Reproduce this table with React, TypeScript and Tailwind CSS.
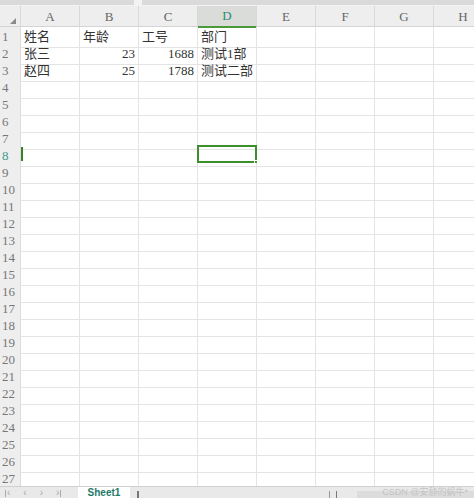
const COLS = ['A', 'B', 'C', 'D', 'E', 'F', 'G', 'H']
const ROWS = Array.from({ length: 27 }, (_, i) => i + 1)

const DATA: Record<number, { v: string; right?: boolean }[]> = {
  1: [{ v: '姓名' }, { v: '年龄' }, { v: '工号' }, { v: '部门' }],
  2: [{ v: '张三' }, { v: '23', right: true }, { v: '1688', right: true }, { v: '测试1部' }],
  3: [{ v: '赵四' }, { v: '25', right: true }, { v: '1788', right: true }, { v: '测试二部' }],
}

const FONT = "font-['Liberation_Serif','Noto_Sans_CJK_SC',serif]"

export default function App() {
  return (
    <div className={`w-[474px] h-[498px] overflow-hidden bg-white relative ${FONT}`}>
      {/* top strip */}
      <div className="flex h-[6px] bg-[#f3f3f3]">
        <div className="w-[134px] h-[5px] bg-[#dadada]" />
        <div className="w-[8px]" />
        <div className="flex-1 h-[5px] bg-[#dadada]" />
      </div>

      {/* column header */}
      <div className="grid grid-cols-[21px_repeat(8,59px)] h-[21px] bg-[#eeeeee] border-b border-[#d4d4d4]">
        <div className="relative border-r border-[#d8d8d8]">
          <div className="absolute right-[4px] bottom-[4px] w-0 h-0 border-l-[6px] border-l-transparent border-b-[6px] border-b-[#8a8a8a]" />
        </div>
        {COLS.map(c => (
          <div
            key={c}
            className={`flex items-center justify-center text-[13px] border-r border-[#d8d8d8] ${
              c === 'D'
                ? 'bg-[#d9dcd9] text-[#2e8b6e] border-b-2 border-b-[#4a9a3a]'
                : 'text-[#666]'
            }`}
          >
            {c}
          </div>
        ))}
      </div>

      {/* grid body */}
      <div className="flex flex-col">
        {ROWS.map(r => (
          <div key={r} className="grid grid-cols-[21px_repeat(8,59px)] h-[17px]">
            <div
              className={`flex items-center pl-[2px] text-[13px] bg-[#eeeeee] border-r border-b border-[#dcdcdc] ${
                r === 8 ? 'text-[#3e9a8a]' : 'text-[#777]'
              }`}
            >
              {r}
            </div>
            {COLS.map((c, ci) => {
              const cell = DATA[r]?.[ci]
              const sel = r === 8 && c === 'D'
              return (
                <div
                  key={c}
                  className={`relative flex items-center text-[13px] text-[#333] border-r border-b border-[#e4e4e4] px-[3px] whitespace-nowrap ${
                    cell?.right ? 'justify-end' : ''
                  }`}
                >
                  {cell?.v}
                  {r === 8 && c === 'A' && (
                    <div className="absolute left-0 top-[1px] w-[2px] h-[14px] bg-[#3a7f2a]" />
                  )}
                  {sel && (
                    <div className="absolute -left-[1px] -top-[1px] w-[60px] h-[18px] border-2 border-[#3c8f2c]">
                      <div className="absolute -right-[3px] -bottom-[3px] w-[4px] h-[4px] bg-[#3c8f2c] border border-white" />
                    </div>
                  )}
                </div>
              )
            })}
          </div>
        ))}
      </div>

      {/* sheet tab bar */}
      <div className="absolute left-0 top-[486px] w-[474px] h-[12px] bg-[#e9e9e9] border-t border-[#d0d0d0] flex items-start">
        <div className="flex items-start gap-[13px] pl-[5px] pt-[1px] text-[10px] text-[#aaa] font-['Liberation_Sans',sans-serif] leading-[10px] w-[78px]">
          <span className="flex items-start gap-[1px]">
            <span className="mt-[2px] w-[1px] h-[7px] bg-[#aaa]" />
            <span>‹</span>
          </span>
          <span>‹</span>
          <span>›</span>
          <span className="flex items-start gap-[1px]">
            <span>›</span>
            <span className="mt-[2px] w-[1px] h-[7px] bg-[#aaa]" />
          </span>
        </div>
        <div className="w-[52px] h-[11px] bg-white flex items-start justify-center pt-[1px]">
          <span className="text-[10px] font-bold text-[#1f7a6a] font-['Liberation_Sans',sans-serif] leading-[10px]">Sheet1</span>
        </div>
        <div className="ml-[7px] mt-[4px] w-[2px] h-[7px] bg-[#777]" />
        <div className="ml-[190px] mt-[4px] w-[1px] h-[7px] bg-[#999]" />
        <div className="ml-[6px] mt-[4px] w-[1px] h-[7px] bg-[#777]" />
        <div className="ml-[20px] mt-[4px] flex-1 h-[7px] bg-[#dcdcdc]" />
      </div>
      <div className="absolute right-[6px] top-[487px] text-[9px] leading-[10px] text-[#c4c4c4] font-['Liberation_Sans','Noto_Sans_CJK_SC',sans-serif]">
        CSDN @安静的蜗牛*
      </div>
    </div>
  )
}
